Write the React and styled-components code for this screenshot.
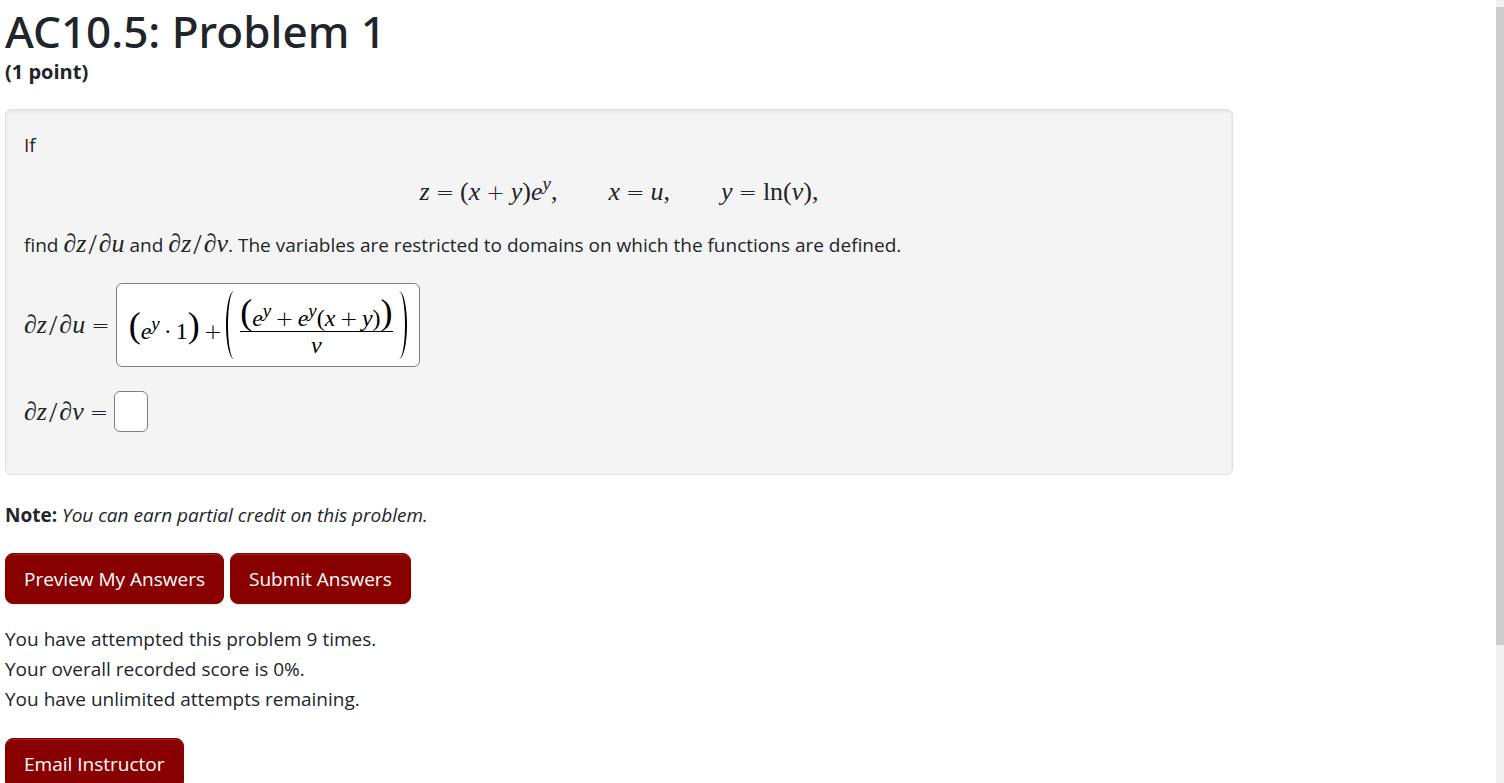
import React from "react";
import styled, { createGlobalStyle } from "styled-components";

const GlobalStyle = createGlobalStyle`
  *, *::before, *::after { box-sizing: border-box; }
  body {
    margin: 0;
    background: #fff;
    color: #212529;
    font-family: "Open Sans", "Noto Sans", sans-serif;
    font-size: 19px;
    line-height: 30px;
  }
`;

const Page = styled.div`
  display: flex;
  height: 100vh;
  overflow: hidden;
`;

const Content = styled.main`
  flex: 1;
  min-width: 0;
  padding: 4px 5px 0;
`;

const Track = styled.div`
  flex: none;
  width: 8px;
  padding-top: 7px;
  background: #f0f0f0;
`;

const Thumb = styled.div`
  height: calc(82% + 2px);
  background: #cdcdcd;
`;

const Title = styled.h1`
  margin: 0;
  font-family: "Noto Sans", sans-serif;
  font-size: 44px;
  font-weight: 500;
  line-height: 55px;
`;

const Points = styled.h2`
  margin: 0 0 25px;
  font-size: 20px;
  font-weight: 700;
  line-height: 25px;
`;

const Problem = styled.section`
  max-width: 1228px;
  margin-bottom: 25px;
  padding: 20px 18px 42px;
  border: 1px solid #e1e1e1;
  border-radius: 6px;
  background: #f4f4f4;
  box-shadow: inset 0 2px 3px rgba(0, 0, 0, 0.06);
`;

const Text = styled.p`
  margin: 0;
`;

const Equations = styled.div`
  display: flex;
  justify-content: center;
  gap: 51px;
  margin: 17px 0 22px;
`;

const Math = styled.span`
  font-family: "Liberation Serif", serif;
  font-size: 26px;
  line-height: 30px;
  white-space: nowrap;
`;

const Var = styled.i`
  font-style: italic;
`;

const Op = styled.span`
  margin: 0 ${(p) => p.$gap ?? 6}px;
  font-family: "DejaVu Sans", sans-serif;
  font-size: 22px;
  font-weight: 200;
  line-height: 0;
`;

const Dot = styled.span`
  margin: 0 4px;
`;

const Slash = styled.span`
  margin: 0 2px;
  font-size: 30px;
  line-height: 0;
  vertical-align: -2px;
`;

const Sup = styled.sup`
  font-size: 19px;
  font-style: italic;
  line-height: 0;
`;

const AnswerRow = styled.div`
  display: flex;
  align-items: center;
  margin-top: 23px;

  & + & {
    margin-top: 24px;
  }
`;

const MathField = styled.div`
  display: flex;
  align-items: center;
  height: 84px;
  padding: 0 12px;
  border: 1px solid #808080;
  border-radius: 6px;
  background: #fff;
  color: #000;
  font-family: "Liberation Serif", serif;
  font-size: 24px;
  line-height: 26px;
  white-space: nowrap;
`;

const Group = styled.span`
  display: flex;
  align-items: center;
`;

const Term = styled.span`
  padding-top: 12px;
`;

const Paren = styled.span`
  font-size: 36px;
  line-height: 36px;
`;

const Fence = styled.span`
  width: 8px;
  height: 68px;
  border: 0 solid #000;
  ${(p) =>
    p.$side === "left"
      ? "border-left-width: 2px; border-radius: 100% 0 0 100% / 50% 0 0 50%;"
      : "border-right-width: 2px; border-radius: 0 100% 100% 0 / 0 50% 50% 0;"}
`;

const Fraction = styled.span`
  display: flex;
  flex-direction: column;
  align-items: center;
  margin: 0 6px;
`;

const Numerator = styled.span`
  display: flex;
  align-items: center;
  border-bottom: 1px solid #000;
`;

const AnswerInput = styled.input`
  width: 34px;
  height: 41px;
  padding: 0 6px;
  border: 1px solid #808080;
  border-radius: 6px;
  background: #fff;
  font: inherit;
`;

const Note = styled.p`
  margin: 0 0 23px;
`;

const Buttons = styled.div`
  display: flex;
  gap: 6px;
`;

const Button = styled.button`
  height: 51px;
  padding: 0 18px;
  border: 1px solid #880000;
  border-radius: 8px;
  background: #880000;
  box-shadow: inset 0 1px 0 rgba(255, 255, 255, 0.15), 0 1px 1px rgba(0, 0, 0, 0.08);
  color: #fff;
  font: inherit;
`;

const Status = styled.div`
  margin: 20px 0 24px;
`;

const Partial = ({ v }) => (
  <>
    ∂<Var>z</Var><Slash>/</Slash>∂<Var>{v}</Var>
  </>
);

export default function App() {
  return (
    <Page>
      <GlobalStyle />
      <Content>
        <Title>AC10.5: Problem 1</Title>
        <Points>(1 point)</Points>
        <Problem>
          <Text>If</Text>
          <Equations>
            <Math>
              <Var>z</Var><Op>=</Op>(<Var>x</Var><Op>+</Op><Var>y</Var>)<Var>e</Var><Sup>y</Sup>,
            </Math>
            <Math><Var>x</Var><Op>=</Op><Var>u</Var>,</Math>
            <Math><Var>y</Var><Op>=</Op>ln(<Var>v</Var>),</Math>
          </Equations>
          <Text>
            find <Math><Partial v="u" /></Math> and <Math><Partial v="v" /></Math>. The variables are
            restricted to domains on which the functions are defined.
          </Text>
          <AnswerRow>
            <Math id="label-u"><Partial v="u" /><Op>=</Op></Math>
            <MathField role="textbox" tabIndex={0} aria-labelledby="label-u">
              <Group>
                <Paren>(</Paren>
                <Term><Var>e</Var><Sup>y</Sup><Dot>·</Dot>1</Term>
                <Paren>)</Paren>
              </Group>
              <Term><Op $gap={4}>+</Op></Term>
              <Group>
                <Fence $side="left" />
                <Fraction>
                  <Numerator>
                    <Paren>(</Paren>
                    <Term>
                      <Var>e</Var><Sup>y</Sup><Op $gap={4}>+</Op><Var>e</Var><Sup>y</Sup>(<Var>x</Var>
                      <Op $gap={4}>+</Op><Var>y</Var>)
                    </Term>
                    <Paren>)</Paren>
                  </Numerator>
                  <Var>v</Var>
                </Fraction>
                <Fence $side="right" />
              </Group>
            </MathField>
          </AnswerRow>
          <AnswerRow>
            <Math as="label" htmlFor="answer-v"><Partial v="v" /><Op>=</Op></Math>
            <AnswerInput id="answer-v" type="text" />
          </AnswerRow>
        </Problem>
        <Note><strong>Note:</strong> <em>You can earn partial credit on this problem.</em></Note>
        <Buttons>
          <Button type="button">Preview My Answers</Button>
          <Button type="button">Submit Answers</Button>
        </Buttons>
        <Status>
          <Text>You have attempted this problem 9 times.</Text>
          <Text>Your overall recorded score is 0%.</Text>
          <Text>You have unlimited attempts remaining.</Text>
        </Status>
        <Button type="button">Email Instructor</Button>
      </Content>
      <Track aria-hidden="true"><Thumb /></Track>
    </Page>
  );
}
